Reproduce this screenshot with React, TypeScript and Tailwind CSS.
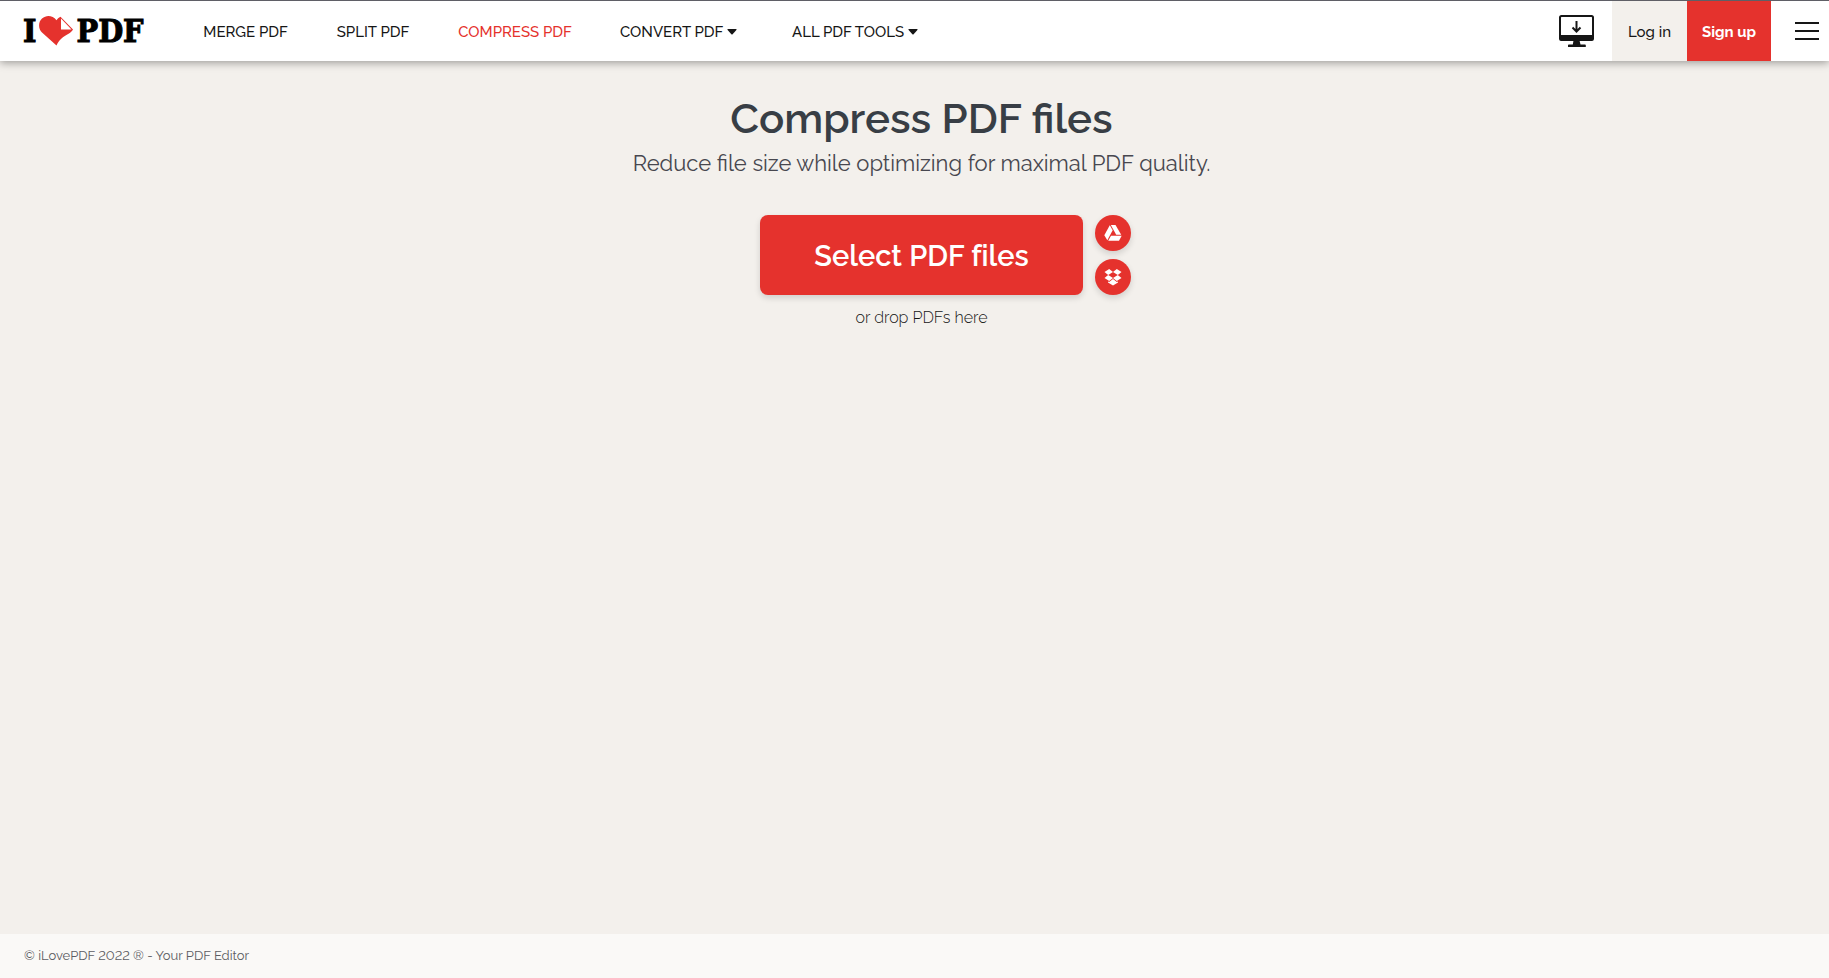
import { useState } from "react";

const RED = "#e5322d";

const navLinks = [
  { label: "MERGE PDF", width: "w-[133px]" },
  { label: "SPLIT PDF", width: "w-[122px]" },
  { label: "COMPRESS PDF", width: "w-[162px]" },
];

const navMenus = [
  { label: "CONVERT PDF", width: "w-[172px]" },
  { label: "ALL PDF TOOLS", width: "w-[172px]" },
];

function Heart() {
  return (
    <svg width="34" height="30" viewBox="0 0 34 30" aria-hidden="true">
      <path
        d="M17.500 29.500 3 16.500C-1 12.500-.8 6 3 2.600 7.500-1.300 13.500-.6 17.500 4.200 18.500 2.800 19.500 1.700 21.500.8L34 13.500C33 15.200 31.500 16.600 30 17.500 24 20.500 19.500 24.500 17.500 29.500Z"
        fill={RED}
      />
      <path d="M22 2.500V13.600H32.500Z" fill="#fff" />
    </svg>
  );
}

function DesktopIcon() {
  return (
    <svg width="36" height="33" viewBox="0 0 36 33" fill="none" aria-hidden="true">
      <rect x="1" y="1" width="33" height="24" rx="1.500" stroke="#161616" strokeWidth="2" />
      <path d="M1 20h33v4.500a1 1 0 0 1-1 1H2a1 1 0 0 1-1-1Z" fill="#161616" />
      <path d="M14.500 25.500h6l1 4H26a.8.8 0 0 1 .8.8V32H9v-1.700a.8.8 0 0 1 .8-.8h4Z" fill="#161616" />
      <path d="M17.500 6v10.500M13.500 12.500l4 4 4-4" stroke="#161616" strokeWidth="2" />
    </svg>
  );
}

function DriveIcon() {
  return (
    <svg width="18" height="16" viewBox="0 0 18 16" fill="#fff" aria-hidden="true">
      <path d="M5.800.3 8.700 5.300 3.300 15.200.3 10.200Z" />
      <path d="M6.800 0H11.500L17.200 9.800H12.200Z" />
      <path d="M7 10.700H17.700L15 15.800H4.200Z" />
    </svg>
  );
}

function DropboxIcon() {
  return (
    <svg width="18" height="17" viewBox="0 0 18 17" fill="#fff" aria-hidden="true">
      <path d="M5.200 0 9 3 4.200 6 .5 3Z" />
      <path d="M12.800 0 17.500 3 13.800 6 9 3Z" />
      <path d="M4.200 6 9 9 5.200 12 .5 9Z" />
      <path d="M13.800 6 17.500 9 12.800 12 9 9Z" />
      <path d="M9 10 12.800 13 14 12.400V13.500L9 16.500 4 13.500V12.400L5.200 13Z" />
    </svg>
  );
}

export default function App() {
  const [active, setActive] = useState("COMPRESS PDF");

  return (
    <div className="flex min-h-screen flex-col bg-[#f3f0ec] font-['Raleway',Lato,sans-serif] text-[#161616] lining-nums">
      <header className="z-10 flex h-[61px] items-stretch border-t border-[#5f5f66] bg-white shadow-[0_2px_8px_rgba(0,0,0,0.35)]">
        <a
          href="#"
          aria-label="iLovePDF"
          className="flex w-[179px] items-center pl-[23px] font-['DejaVu_Serif_Condensed','DejaVu_Serif',serif] text-[32px] leading-none font-bold text-black [-webkit-text-stroke:1px_black]"
        >
          <span>I</span>
          <span className="mx-[3px]">
            <Heart />
          </span>
          <span>PDF</span>
        </a>

        <nav className="flex items-stretch pt-0.5 text-[15px] font-medium">
          {navLinks.map((link) => (
            <a
              key={link.label}
              href="#"
              onClick={() => setActive(link.label)}
              className={`flex items-center justify-center whitespace-nowrap ${link.width} ${
                active === link.label ? "text-[#e5322d]" : ""
              }`}
            >
              {link.label}
            </a>
          ))}
          {navMenus.map((menu) => (
            <button key={menu.label} type="button" className={`flex items-center gap-1 pl-6 whitespace-nowrap ${menu.width}`}>
              {menu.label}
              <svg width="10" height="6" viewBox="0 0 10 6" fill="#161616" aria-hidden="true">
                <path d="M1 0h8q1 0 .4.900L5.600 5.200q-.6.600-1.200 0L.6.900Q0 0 1 0Z" />
              </svg>
            </button>
          ))}
        </nav>

        <div className="ml-auto flex items-stretch text-[15px]">
          <a href="#" aria-label="Desktop app" className="flex w-[71px] items-center justify-center">
            <DesktopIcon />
          </a>
          <a href="#" className="flex w-[75px] items-center justify-center bg-[#f3f0ec] pt-0.5 font-medium">
            Log in
          </a>
          <a href="#" className="flex w-[84px] items-center justify-center bg-[#e5322d] pt-0.5 font-bold text-white">
            Sign up
          </a>
          <button type="button" aria-label="Menu" className="flex w-[58px] items-center justify-end pr-[10px]">
            <svg width="24" height="18" viewBox="0 0 24 18" fill="#161616" aria-hidden="true">
              <path d="M0 0h24v2H0zM0 8h24v2H0zM0 16h24v2H0z" />
            </svg>
          </button>
        </div>
      </header>

      <main className="flex flex-1 flex-col items-center pt-8 pl-[14px]">
        <h1 className="text-[42px] leading-[52px] font-semibold text-[#383e45]">Compress PDF files</h1>
        <h2 className="pt-0.5 text-[22px] leading-8 font-normal text-[#47474f]">
          Reduce file size while optimizing for maximal PDF quality.
        </h2>

        <div className="mt-9 flex gap-3 pl-12">
          <button
            type="button"
            className="h-20 w-[323px] rounded-lg bg-[#e5322d] pt-1 text-[29px] font-semibold text-white shadow-[0_3px_6px_rgba(0,0,0,0.14)] [font-variant-ligatures:no-common-ligatures]"
          >
            Select PDF files
          </button>
          <div className="flex flex-col gap-2">
            <button
              type="button"
              aria-label="Select from Google Drive"
              className="flex size-9 items-center justify-center rounded-full bg-[#e5322d] shadow-[0_3px_6px_rgba(0,0,0,0.14)]"
            >
              <DriveIcon />
            </button>
            <button
              type="button"
              aria-label="Select from Dropbox"
              className="flex size-9 items-center justify-center rounded-full bg-[#e5322d] shadow-[0_3px_6px_rgba(0,0,0,0.14)]"
            >
              <DropboxIcon />
            </button>
          </div>
        </div>
        <p className="mt-[11px] text-base font-light">or drop PDFs here</p>
      </main>

      <footer className="flex h-11 items-center bg-[#faf9f7] px-6 text-[13px] text-[#5c5c62]">
        © iLovePDF 2022 ® - Your PDF Editor
      </footer>
    </div>
  );
}
